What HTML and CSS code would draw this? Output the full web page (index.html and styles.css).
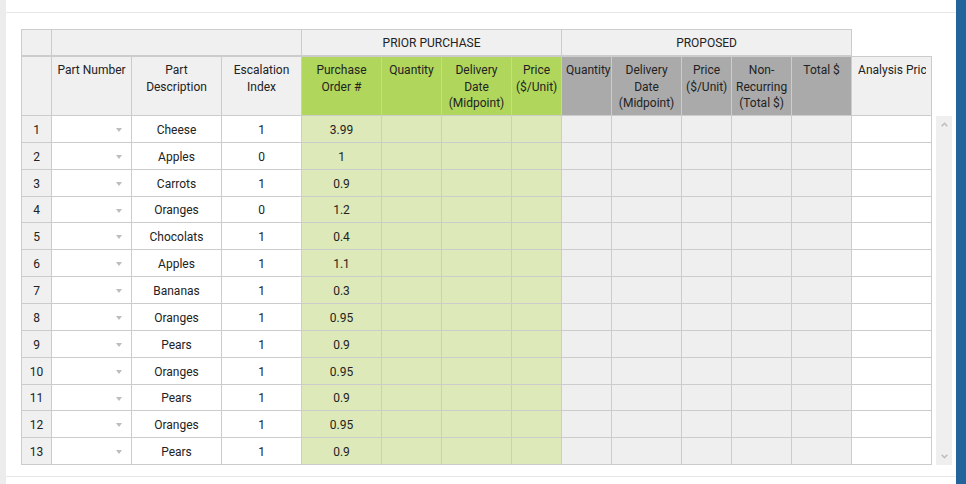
FILE: index.html
```html
<!DOCTYPE html>
<html lang="en">
<head>
<meta charset="utf-8">
<title>Purchase analysis</title>
<link rel="stylesheet" href="styles.css">
</head>
<body>
<div class="page">
  <div class="side"></div>
  <main class="panel">
    <div class="frame">
      <div class="grid-wrap">
        <table class="grid">
          <colgroup>
            <col class="w-row"><col class="w80"><col class="w90"><col class="w80"><col class="w80"><col class="w60"><col class="w70"><col class="w50"><col class="w50"><col class="w70"><col class="w50"><col class="w60"><col class="w60"><col class="w80">
          </colgroup>
          <thead>
            <tr class="group">
              <th class="corner"></th>
              <th colspan="3"></th>
              <th colspan="4">PRIOR PURCHASE</th>
              <th colspan="5">PROPOSED</th>
              <th class="blank"></th>
            </tr>
            <tr class="cols">
              <th class="corner"></th>
              <th>Part Number</th>
              <th>Part Description</th>
              <th>Escalation Index</th>
              <th class="hg">Purchase Order #</th>
              <th class="hg">Quantity</th>
              <th class="hg">Delivery Date (Midpoint)</th>
              <th class="hg">Price ($/Unit)</th>
              <th class="hx">Quantity</th>
              <th class="hx">Delivery Date (Midpoint)</th>
              <th class="hx">Price ($/Unit)</th>
              <th class="hx">Non-Recurring (Total $)</th>
              <th class="hx">Total $</th>
              <th class="ha"><div class="clip">Analysis Price</div></th>
            </tr>
          </thead>
          <tbody>
            <tr class="r27"><td class="rh">1</td><td class="dd"><span class="arrow"></span></td><td>Cheese</td><td>1</td><td class="g">3.99</td><td class="g"></td><td class="g"></td><td class="g"></td><td class="x"></td><td class="x"></td><td class="x"></td><td class="x"></td><td class="x"></td><td></td></tr>
            <tr class="r27"><td class="rh">2</td><td class="dd"><span class="arrow"></span></td><td>Apples</td><td>0</td><td class="g">1</td><td class="g"></td><td class="g"></td><td class="g"></td><td class="x"></td><td class="x"></td><td class="x"></td><td class="x"></td><td class="x"></td><td></td></tr>
            <tr class="r27"><td class="rh">3</td><td class="dd"><span class="arrow"></span></td><td>Carrots</td><td>1</td><td class="g">0.9</td><td class="g"></td><td class="g"></td><td class="g"></td><td class="x"></td><td class="x"></td><td class="x"></td><td class="x"></td><td class="x"></td><td></td></tr>
            <tr class="r26"><td class="rh">4</td><td class="dd"><span class="arrow"></span></td><td>Oranges</td><td>0</td><td class="g">1.2</td><td class="g"></td><td class="g"></td><td class="g"></td><td class="x"></td><td class="x"></td><td class="x"></td><td class="x"></td><td class="x"></td><td></td></tr>
            <tr class="r27"><td class="rh">5</td><td class="dd"><span class="arrow"></span></td><td>Chocolats</td><td>1</td><td class="g">0.4</td><td class="g"></td><td class="g"></td><td class="g"></td><td class="x"></td><td class="x"></td><td class="x"></td><td class="x"></td><td class="x"></td><td></td></tr>
            <tr class="r27"><td class="rh">6</td><td class="dd"><span class="arrow"></span></td><td>Apples</td><td>1</td><td class="g">1.1</td><td class="g"></td><td class="g"></td><td class="g"></td><td class="x"></td><td class="x"></td><td class="x"></td><td class="x"></td><td class="x"></td><td></td></tr>
            <tr class="r27"><td class="rh">7</td><td class="dd"><span class="arrow"></span></td><td>Bananas</td><td>1</td><td class="g">0.3</td><td class="g"></td><td class="g"></td><td class="g"></td><td class="x"></td><td class="x"></td><td class="x"></td><td class="x"></td><td class="x"></td><td></td></tr>
            <tr class="r27"><td class="rh">8</td><td class="dd"><span class="arrow"></span></td><td>Oranges</td><td>1</td><td class="g">0.95</td><td class="g"></td><td class="g"></td><td class="g"></td><td class="x"></td><td class="x"></td><td class="x"></td><td class="x"></td><td class="x"></td><td></td></tr>
            <tr class="r27"><td class="rh">9</td><td class="dd"><span class="arrow"></span></td><td>Pears</td><td>1</td><td class="g">0.9</td><td class="g"></td><td class="g"></td><td class="g"></td><td class="x"></td><td class="x"></td><td class="x"></td><td class="x"></td><td class="x"></td><td></td></tr>
            <tr class="r27"><td class="rh">10</td><td class="dd"><span class="arrow"></span></td><td>Oranges</td><td>1</td><td class="g">0.95</td><td class="g"></td><td class="g"></td><td class="g"></td><td class="x"></td><td class="x"></td><td class="x"></td><td class="x"></td><td class="x"></td><td></td></tr>
            <tr class="r26"><td class="rh">11</td><td class="dd"><span class="arrow"></span></td><td>Pears</td><td>1</td><td class="g">0.9</td><td class="g"></td><td class="g"></td><td class="g"></td><td class="x"></td><td class="x"></td><td class="x"></td><td class="x"></td><td class="x"></td><td></td></tr>
            <tr class="r27"><td class="rh">12</td><td class="dd"><span class="arrow"></span></td><td>Oranges</td><td>1</td><td class="g">0.95</td><td class="g"></td><td class="g"></td><td class="g"></td><td class="x"></td><td class="x"></td><td class="x"></td><td class="x"></td><td class="x"></td><td></td></tr>
            <tr class="r27"><td class="rh">13</td><td class="dd"><span class="arrow"></span></td><td>Pears</td><td>1</td><td class="g">0.9</td><td class="g"></td><td class="g"></td><td class="g"></td><td class="x"></td><td class="x"></td><td class="x"></td><td class="x"></td><td class="x"></td><td></td></tr>
          </tbody>
        </table>
        <div class="vscroll">
          <svg class="chev" width="7" height="5" viewBox="0 0 7 5"><polyline points="0.7,4.3 3.5,1.3 6.3,4.3" fill="none" stroke="#bdbdbd" stroke-width="1.6"/></svg>
          <svg class="chev" width="7" height="5" viewBox="0 0 7 5"><polyline points="0.7,0.7 3.5,3.7 6.3,0.7" fill="none" stroke="#bdbdbd" stroke-width="1.6"/></svg>
        </div>
      </div>
    </div>
  </main>
  <div class="accent"></div>
</div>
</body>
</html>
```

FILE: styles.css
```css
* { box-sizing: border-box; }

html, body {
  margin: 0;
  padding: 0;
  background: #ffffff;
}

body {
  font-family: Roboto, "Liberation Sans", Arial, sans-serif;
  font-size: 12px;
  color: #222222;
}

.page {
  display: flex;
  width: 966px;
  height: 484px;
  overflow: hidden;
}

.side {
  width: 6px;
  flex: none;
  background: #ececec;
}

.panel {
  flex: 1;
  background: #ffffff;
  padding-top: 12px;
}

.accent {
  width: 10px;
  flex: none;
  background: #23659b;
}

.frame {
  border-top: 1px solid #e8e8e8;
  border-bottom: 1px solid #e8e8e8;
  padding: 16px 0 11px 15px;
}

.grid-wrap {
  display: flex;
  align-items: flex-start;
}

.grid {
  border-collapse: separate;
  border-spacing: 0;
  table-layout: fixed;
  width: 911px;
  flex: none;
}

.w-row { width: 31px; }
.w50 { width: 50px; }
.w60 { width: 60px; }
.w70 { width: 70px; }
.w80 { width: 80px; }
.w90 { width: 90px; }

.grid th,
.grid td {
  border-right: 1px solid #cccccc;
  border-bottom: 1px solid #cccccc;
  padding: 0 4px;
  overflow: hidden;
  text-align: center;
  font-weight: normal;
  font-size: 12px;
  color: #222222;
}

.grid th {
  background: #f0f0f0;
}

.grid .corner,
.grid .rh {
  border-left: 1px solid #cccccc;
}

.group {
  height: 27px;
}

.group th {
  border-top: 1px solid #cccccc;
  vertical-align: middle;
}

.group th.blank {
  border: none;
  background: #ffffff;
}

.cols {
  height: 60px;
}

.cols th {
  border-top: 1px solid #cccccc;
  vertical-align: top;
  padding-top: 5px;
  line-height: 16.7px;
}

.grid th.hg { background: #b0d65c; }
.grid th.hx { background: #aaaaaa; }

.grid th.ha {
  padding-left: 6px;
  padding-right: 5px;
}

.clip {
  white-space: nowrap;
  overflow: hidden;
  text-align: left;
}

.r27 { height: 27px; }
.r26 { height: 26px; }

.grid td {
  vertical-align: middle;
  background: #ffffff;
  line-height: 15px;
  padding-top: 2px;
}

.grid td.rh { background: #f0f0f0; }
.grid td.g { background: #dde9b9; }
.grid td.x { background: #efefef; }

.grid td.dd {
  text-align: right;
  padding-right: 9px;
}

.arrow {
  display: inline-block;
  width: 0;
  height: 0;
  border-left: 3.5px solid transparent;
  border-right: 3.5px solid transparent;
  border-top: 4px solid #bdbdbd;
  vertical-align: middle;
}

.vscroll {
  width: 16px;
  height: 349px;
  margin-left: 4px;
  margin-top: 87px;
  background: #efefef;
  display: flex;
  flex-direction: column;
  justify-content: space-between;
  align-items: center;
  padding: 6px 0;
  flex: none;
}

.chev {
  display: block;
}
```
